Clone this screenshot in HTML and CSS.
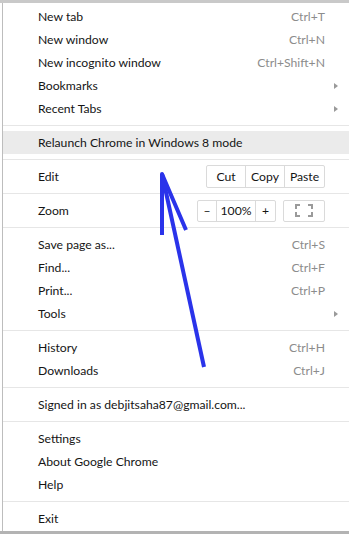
FILE: index.html
```html
<!DOCTYPE html>
<html lang="en">
<head>
  <meta charset="UTF-8" />
  <meta name="viewport" content="width=device-width,initial-scale=1" />
  <title>Chrome menu</title>
  <link rel="stylesheet" href="styles.css">
</head>
<body>
  <div class="page">
    <div class="menu">
      <div class="item"><span class="label">New tab</span><span class="accel">Ctrl+T</span></div>
      <div class="item"><span class="label">New window</span><span class="accel">Ctrl+N</span></div>
      <div class="item"><span class="label">New incognito window</span><span class="accel">Ctrl+Shift+N</span></div>
      <div class="item"><span class="label">Bookmarks</span><span class="sub"></span></div>
      <div class="item"><span class="label">Recent Tabs</span><span class="sub"></span></div>
      <div class="sep"></div>
      <div class="item hover"><span class="label">Relaunch Chrome in Windows 8 mode</span></div>
      <div class="sep"></div>
      <div class="item"><span class="label">Edit</span>
        <div class="group">
          <div class="btn w-cut">Cut</div>
          <div class="btn w-copy">Copy</div>
          <div class="btn w-paste">Paste</div>
        </div>
      </div>
      <div class="sep"></div>
      <div class="item"><span class="label">Zoom</span>
        <div class="group zoom">
          <div class="btn w-minus">–</div>
          <div class="btn w-pct">100%</div>
          <div class="btn w-plus">+</div>
        </div>
        <div class="group full">
          <div class="btn w-full">
            <svg width="18" height="13" viewBox="0 0 18 13">
              <path d="M1 5V1h4M13 1h4v4M17 8v4h-4M5 12H1V8" fill="none" stroke="#9a9a9a" stroke-width="2"/>
            </svg>
          </div>
        </div>
      </div>
      <div class="sep"></div>
      <div class="item"><span class="label">Save page as...</span><span class="accel">Ctrl+S</span></div>
      <div class="item"><span class="label">Find...</span><span class="accel">Ctrl+F</span></div>
      <div class="item"><span class="label">Print...</span><span class="accel">Ctrl+P</span></div>
      <div class="item"><span class="label">Tools</span><span class="sub"></span></div>
      <div class="sep"></div>
      <div class="item"><span class="label">History</span><span class="accel">Ctrl+H</span></div>
      <div class="item"><span class="label">Downloads</span><span class="accel">Ctrl+J</span></div>
      <div class="sep"></div>
      <div class="item"><span class="label">Signed in as debjitsaha87@gmail.com...</span></div>
      <div class="sep"></div>
      <div class="item"><span class="label">Settings</span></div>
      <div class="item"><span class="label">About Google Chrome</span></div>
      <div class="item"><span class="label">Help</span></div>
      <div class="sep"></div>
      <div class="item"><span class="label">Exit</span></div>
    </div>
  </div>

  <!-- hand-drawn arrow over the menu -->
  <svg class="scribble" width="349" height="534" viewBox="0 0 349 534">
    <g fill="none" stroke="#2a33ea" stroke-width="4" stroke-linecap="butt" stroke-linejoin="round">
      <path d="M162 235V174L186 230"/>
      <path d="M162 174L204 367"/>
    </g>
  </svg>
</body>
</html>
```

FILE: styles.css
```css
:root {
  --text: #151515;
  --muted: #8c8c8c;
  --line: #e6e6e6;
  --frame: #bdbdbd;
  --btn-border: #dadada;
}
* { box-sizing: border-box; margin:0; padding:0 }
html, body {
  width:349px; height:534px; overflow:hidden;
  background:#fff; color:var(--text);
  font-family:Lato, "Noto Sans", sans-serif; font-size:12.2px;
}
.page {
  height:534px;
  border-top:3px solid #c9c9c9;
  border-bottom:3px solid #b3b3b3;
  padding-left:2px;
}
.menu {
  height:100%;
  border-left:1px solid var(--frame);
  padding-top:2px;
}
.item {
  height:23px; display:flex; align-items:center;
  padding-left:35px; padding-right:24px;
}
.item.hover { background:#ebebeb }
.label { flex:1; white-space:nowrap }
.accel { color:var(--muted) }
.sub {
  width:0; height:0; margin-right:-13px;
  border-top:3.5px solid transparent; border-bottom:3.5px solid transparent;
  border-left:4px solid #9a9a9a;
}
.sep { height:11px; padding-top:5px }
.sep::before { content:""; display:block; height:1px; background:var(--line) }

.group {
  display:flex; height:23px;
  border:1px solid var(--btn-border); border-radius:2px;
}
.group.zoom, .group.full { height:22px }
.group.full { margin-left:7px }
.btn {
  display:flex; align-items:center; justify-content:center;
  border-left:1px solid var(--btn-border);
}
.btn:first-child { border-left:none }
.w-cut { width:38px }
.w-copy { width:39px }
.w-paste { width:40px }
.w-minus { width:18px }
.w-pct { width:39px }
.w-plus { width:20px }
.w-full { width:40px }

.scribble { position:absolute; left:0; top:0; pointer-events:none }
```
